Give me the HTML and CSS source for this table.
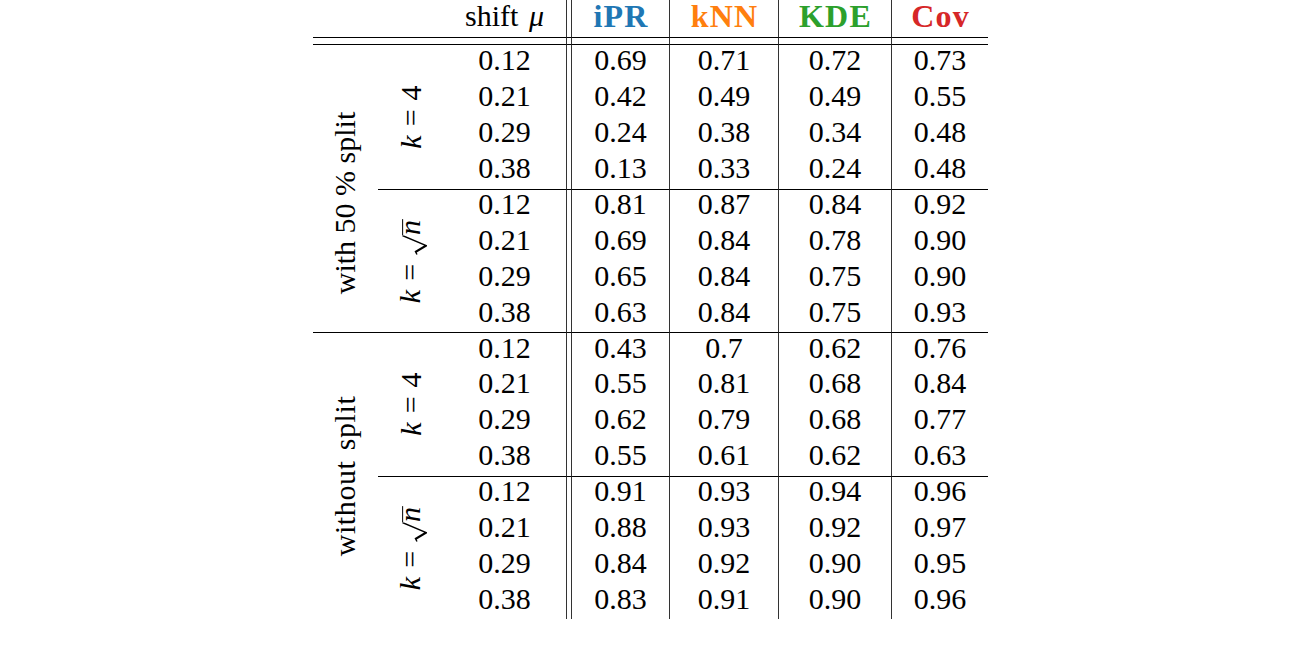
FILE: index.html
```html
<!DOCTYPE html>
<html lang="en">
<head>
<meta charset="utf-8">
<title>Results table</title>
<link rel="stylesheet" href="styles.css">
</head>
<body>
<div class="tbl">
  <div class="h corner"></div>
  <div class="h">shift&nbsp;<i class="mu">μ</i></div>
  <div class="h sp"></div>
  <div class="h hd ipr">iPR</div>
  <div class="h hd knn vl">kNN</div>
  <div class="h hd kde vl">KDE</div>
  <div class="h hd cov vl">Cov</div>

  <div class="rule"></div><div class="rule"></div><div class="rule"></div><div class="rule sp"></div><div class="rule"></div><div class="rule vl"></div><div class="rule vl"></div><div class="rule vl"></div>

  <div class="grp grp-first"><span class="rot">with 50 % split</span></div>
  <div class="kl"><span class="rot"><i>k</i><span class="eq">=</span>4</span></div>
  <div class="v">0.12</div><div class="sp"></div><div class="v">0.69</div><div class="v vl">0.71</div><div class="v vl">0.72</div><div class="v vl">0.73</div>
  <div class="v">0.21</div><div class="sp"></div><div class="v">0.42</div><div class="v vl">0.49</div><div class="v vl">0.49</div><div class="v vl">0.55</div>
  <div class="v">0.29</div><div class="sp"></div><div class="v">0.24</div><div class="v vl">0.38</div><div class="v vl">0.34</div><div class="v vl">0.48</div>
  <div class="v">0.38</div><div class="sp"></div><div class="v">0.13</div><div class="v vl">0.33</div><div class="v vl">0.24</div><div class="v vl">0.48</div>

  <div class="kl top"><span class="rot"><i>k</i><span class="eq">=</span><span class="sqrt"><svg class="radical" viewBox="0 0 20 25" width="20" height="25"><path d="M0.5 14.2 L3.8 12.4 L9.6 22 L18.9 0 L20 0 L20 1.5 L19.9 1.5 L9.9 25 L8.9 25 L2.6 14.6 L1 15.5 Z"/></svg><span class="rad"><i>n</i></span></span></span></div>
  <div class="v top">0.12</div><div class="sp top"></div><div class="v top">0.81</div><div class="v vl top">0.87</div><div class="v vl top">0.84</div><div class="v vl top">0.92</div>
  <div class="v">0.21</div><div class="sp"></div><div class="v">0.69</div><div class="v vl">0.84</div><div class="v vl">0.78</div><div class="v vl">0.90</div>
  <div class="v">0.29</div><div class="sp"></div><div class="v">0.65</div><div class="v vl">0.84</div><div class="v vl">0.75</div><div class="v vl">0.90</div>
  <div class="v">0.38</div><div class="sp"></div><div class="v">0.63</div><div class="v vl">0.84</div><div class="v vl">0.75</div><div class="v vl">0.93</div>

  <div class="grp top"><span class="rot lbl">without split</span></div>
  <div class="kl top"><span class="rot"><i>k</i><span class="eq">=</span>4</span></div>
  <div class="v top">0.12</div><div class="sp top"></div><div class="v top">0.43</div><div class="v vl top">0.7</div><div class="v vl top">0.62</div><div class="v vl top">0.76</div>
  <div class="v">0.21</div><div class="sp"></div><div class="v">0.55</div><div class="v vl">0.81</div><div class="v vl">0.68</div><div class="v vl">0.84</div>
  <div class="v">0.29</div><div class="sp"></div><div class="v">0.62</div><div class="v vl">0.79</div><div class="v vl">0.68</div><div class="v vl">0.77</div>
  <div class="v">0.38</div><div class="sp"></div><div class="v">0.55</div><div class="v vl">0.61</div><div class="v vl">0.62</div><div class="v vl">0.63</div>

  <div class="kl top"><span class="rot"><i>k</i><span class="eq">=</span><span class="sqrt"><svg class="radical" viewBox="0 0 20 25" width="20" height="25"><path d="M0.5 14.2 L3.8 12.4 L9.6 22 L18.9 0 L20 0 L20 1.5 L19.9 1.5 L9.9 25 L8.9 25 L2.6 14.6 L1 15.5 Z"/></svg><span class="rad"><i>n</i></span></span></span></div>
  <div class="v top">0.12</div><div class="sp top"></div><div class="v top">0.91</div><div class="v vl top">0.93</div><div class="v vl top">0.94</div><div class="v vl top">0.96</div>
  <div class="v">0.21</div><div class="sp"></div><div class="v">0.88</div><div class="v vl">0.93</div><div class="v vl">0.92</div><div class="v vl">0.97</div>
  <div class="v">0.29</div><div class="sp"></div><div class="v">0.84</div><div class="v vl">0.92</div><div class="v vl">0.90</div><div class="v vl">0.95</div>
  <div class="v">0.38</div><div class="sp"></div><div class="v">0.83</div><div class="v vl">0.91</div><div class="v vl">0.90</div><div class="v vl">0.96</div>
</div>
</body>
</html>
```
FILE: styles.css
```css
html, body {
  margin: 0;
  padding: 0;
  background: #fff;
}

body {
  color: #000;
  font-family: "Liberation Serif", "Times New Roman", serif;
}

.tbl {
  display: grid;
  width: 675px;
  margin: 0 auto;
  grid-template-columns: 65px 65px 123px 6px 97px 109px 113px 97px;
  grid-template-rows: 37px 8px repeat(16, 35.875px);
  font-size: 30px;
}

.tbl > div {
  box-sizing: border-box;
  display: flex;
  align-items: center;
  justify-content: center;
  white-space: nowrap;
}

.h {
  padding-bottom: 5px;
}

.corner {
  grid-column: span 2;
}

.mu {
  margin-left: 3px;
}

.hd {
  font-weight: bold;
  font-size: 32px;
  letter-spacing: 1.2px;
  padding-left: 1px;
}

.ipr { color: #1f77b4; }
.knn { color: #ff7f0e; }
.kde { color: #2ca02c; }
.cov { color: #d62728; }

.sp {
  border-left: 1px solid #333;
  border-right: 1px solid #333;
}

.vl {
  border-left: 1px solid #333;
}

.rule {
  border-top: 1px solid #000;
  border-bottom: 1px solid #000;
}

.v {
  padding-bottom: 5px;
}

.top {
  border-top: 1px solid #000;
}

.grp {
  grid-row: span 8;
}

.grp-first {
  padding-top: 28px;
}

.kl {
  grid-row: span 4;
}

.rot {
  display: inline-block;
  flex-shrink: 0;
  white-space: nowrap;
  transform: rotate(-90deg);
}

.lbl {
  letter-spacing: 0.6px;
  word-spacing: 2px;
}

.eq {
  margin: 0 9px;
}

.sqrt {
  display: inline-block;
  line-height: 12px;
  white-space: nowrap;
}

.radical {
  vertical-align: top;
  fill: #000;
}

.rad {
  display: inline-block;
  border-top: 1.5px solid #000;
  padding-top: 1px;
  padding-right: 1px;
  line-height: 12px;
}
```
